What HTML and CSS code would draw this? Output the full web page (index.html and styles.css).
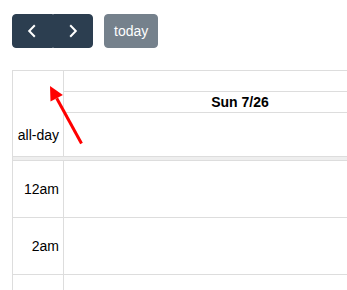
FILE: index.html
```html
<!DOCTYPE html>
<html>
<head>
<meta charset="utf-8">
<link rel="stylesheet" href="styles.css">
</head>
<body>
<div class="app">
  <div class="toolbar">
    <div class="btn-group">
      <button class="btn btn-icon btn-prev" aria-label="prev">
        <svg width="10" height="14" viewBox="0 0 10 14"><polyline points="7.8,1.2 2.2,7 7.8,12.8" fill="none" stroke="#fff" stroke-width="2" stroke-linejoin="miter"/></svg>
      </button>
      <button class="btn btn-icon btn-next" aria-label="next">
        <svg width="10" height="14" viewBox="0 0 10 14"><polyline points="2.2,1.2 7.8,7 2.2,12.8" fill="none" stroke="#fff" stroke-width="2" stroke-linejoin="miter"/></svg>
      </button>
    </div>
    <button class="btn btn-today" disabled>today</button>
  </div>
  <div class="cal">
    <div class="head">
      <div class="axis-head"><div class="allday-label">all-day</div></div>
      <div class="day-head">
        <div class="hrow hrow-top"></div>
        <div class="hrow hrow-day">Sun 7/26</div>
        <div class="hrow hrow-allday"></div>
      </div>
    </div>
    <div class="divider"></div>
    <div class="body">
      <div class="slot"><div class="slot-label">12am</div><div class="slot-lane"></div></div>
      <div class="slot"><div class="slot-label">2am</div><div class="slot-lane"></div></div>
      <div class="slot"><div class="slot-label"></div><div class="slot-lane"></div></div>
    </div>
  </div>
</div>
<svg class="arrow" width="347" height="290" viewBox="0 0 347 290">
  <line x1="56.7" y1="98.3" x2="81.5" y2="143.5" stroke="#f00" stroke-width="3"/>
  <polygon points="50,86 62.9,95 50.5,101.6" fill="#f00"/>
</svg>
</body>
</html>
```
FILE: styles.css
```css
html, body {
  margin: 0;
  padding: 0;
  overflow: hidden;
  background: #fff;
}
body {
  font-family: "Liberation Sans", Arial, Helvetica, sans-serif;
  font-size: 14px;
  color: #000;
  width: 347px;
  height: 290px;
}
.app {
  padding: 14px 0 0 12px;
  width: 404px;
}
.toolbar {
  display: flex;
  align-items: center;
  gap: 11px;
  margin-bottom: 22px;
}
.btn-group {
  display: flex;
}
.btn {
  height: 34px;
  box-sizing: border-box;
  border: 1px solid #2c3e50;
  background: #2c3e50;
  color: #fff;
  font-family: inherit;
  font-size: 14px;
  line-height: 21px;
  padding: 0 9px;
  border-radius: 4px;
  margin: 0;
  display: flex;
  align-items: center;
  justify-content: center;
}
.btn-icon {
  width: 40.5px;
  padding: 0;
}
.btn-prev {
  border-top-right-radius: 0;
  border-bottom-right-radius: 0;
}
.btn-next {
  border-top-left-radius: 0;
  border-bottom-left-radius: 0;
}
.btn-today {
  opacity: 0.65;
}
.cal {
  border-top: 1px solid #ddd;
  border-left: 1px solid #ddd;
}
.head {
  display: flex;
}
.axis-head {
  width: 50px;
  border-right: 1px solid #ddd;
  display: flex;
  flex-direction: column;
  justify-content: flex-end;
}
.allday-label {
  height: 43px;
  display: flex;
  align-items: center;
  justify-content: flex-end;
  padding-right: 4px;
}
.day-head {
  flex: 1;
}
.hrow {
  border-bottom: 1px solid #ddd;
}
.hrow-top {
  height: 20px;
}
.hrow-day {
  height: 20px;
  line-height: 20px;
  text-align: center;
  font-weight: bold;
}
.hrow-allday {
  height: 43px;
  border-bottom: none;
}
.divider {
  height: 3px;
  background: #eee;
  border-top: 1px solid #ddd;
  border-bottom: 1px solid #ddd;
}
.slot {
  display: flex;
  height: 56px;
  border-bottom: 1px solid #ddd;
}
.slot-label {
  width: 46px;
  padding-right: 4px;
  border-right: 1px solid #ddd;
  display: flex;
  align-items: center;
  justify-content: flex-end;
}
.slot-lane {
  flex: 1;
}
.arrow {
  position: absolute;
  left: 0;
  top: 0;
  pointer-events: none;
}
```
